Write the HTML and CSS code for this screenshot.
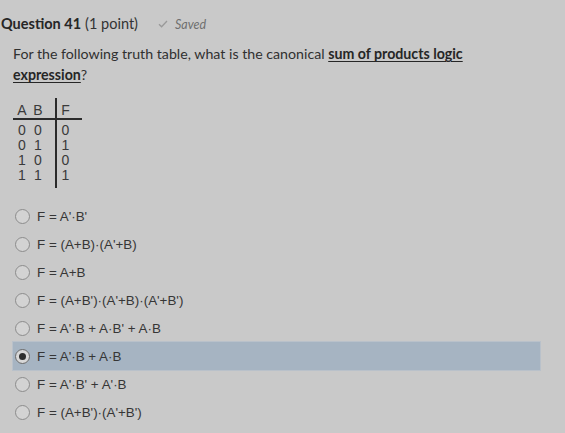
FILE: index.html
```html
<!DOCTYPE html>
<html>
<head>
<meta charset="utf-8">
<link rel="stylesheet" href="styles.css">
</head>
<body>
<div class="page">
  <div class="header">
    <span class="qtitle">Question 41</span>
    <span class="qpoints">(1 point)</span>
    <span class="saved">
      <svg class="check" width="10" height="8" viewBox="0 0 10 8"><path d="M1 4.2 L3.6 6.8 L9 1" fill="none" stroke="#9a9a9a" stroke-width="1.3"/></svg>
      Saved
    </span>
  </div>
  <p class="prompt">For the following truth table, what is the canonical <b class="u">sum of products logic</b><br><b class="u">expression</b>?</p>
  <div class="tt">
    <div class="tt-row head"><span class="ca">A</span><span class="cb">B</span><span class="cf">F</span></div>
    <div class="tt-row first"><span class="ca">0</span><span class="cb">0</span><span class="cf">0</span></div>
    <div class="tt-row"><span class="ca">0</span><span class="cb">1</span><span class="cf">1</span></div>
    <div class="tt-row"><span class="ca">1</span><span class="cb">0</span><span class="cf">0</span></div>
    <div class="tt-row last"><span class="ca">1</span><span class="cb">1</span><span class="cf">1</span></div>
  </div>
  <div class="options">
    <div class="opt"><span class="radio"></span><span class="lbl">F = A'·B'</span></div>
    <div class="opt"><span class="radio"></span><span class="lbl">F = (A+B)·(A'+B)</span></div>
    <div class="opt"><span class="radio"></span><span class="lbl">F = A+B</span></div>
    <div class="opt"><span class="radio"></span><span class="lbl">F = (A+B')·(A'+B)·(A'+B')</span></div>
    <div class="opt"><span class="radio"></span><span class="lbl">F = A'·B + A·B' + A·B</span></div>
    <div class="opt selected"><span class="radio checked"></span><span class="lbl">F = A'·B + A·B</span></div>
    <div class="opt"><span class="radio"></span><span class="lbl">F = A'·B' + A'·B</span></div>
    <div class="opt"><span class="radio"></span><span class="lbl">F = (A+B')·(A'+B')</span></div>
  </div>
</div>
</body>
</html>
```
FILE: styles.css
```css
html, body {
  margin: 0;
  padding: 0;
  background: #c9c9c9;
}
.page {
  width: 565px;
  height: 433px;
  overflow: hidden;
  color: #2b2b2b;
  font-family: Lato, "Liberation Sans", sans-serif;
}
.header {
  display: flex;
  align-items: baseline;
  padding: 14px 0 0 1px;
  height: 22px;
  line-height: 20px;
}
.qtitle {
  font-weight: 700;
  font-size: 14.5px;
  color: #262626;
}
.qpoints {
  font-size: 14.5px;
  margin-left: 4px;
  color: #333;
}
.saved {
  margin-left: 20px;
  font-size: 12.5px;
  font-style: italic;
  color: #6f6f6f;
  display: flex;
  align-items: baseline;
  gap: 7px;
}
.check {
  position: relative;
  top: -1px;
}
.prompt {
  margin: 7px 0 0 13px;
  width: 520px;
  font-size: 14.2px;
  line-height: 21px;
  color: #303030;
}
.u {
  font-weight: 700;
  text-decoration: underline;
  text-underline-offset: 2px;
  color: #262626;
}
.tt {
  margin: 13px 0 0 13px;
  width: 69px;
  font-family: "Liberation Sans", Arial, sans-serif;
  font-size: 14px;
  color: #3a3a3a;
}
.tt-row {
  display: flex;
  line-height: 15px;
}
.tt-row span {
  text-align: center;
}
.ca {
  width: 18px;
}
.cb {
  width: 14px;
  margin-right: 10px;
}
.cf {
  width: 17px;
  border-left: 2px solid #2b2b2b;
}
.tt-row.head {
  line-height: 16px;
  border-bottom: 2px solid #2b2b2b;
}
.tt-row.head span {
  padding-top: 4px;
}
.tt-row.first span {
  padding-top: 3px;
}
.tt-row.last span {
  padding-bottom: 5px;
}
.options {
  margin: 14px 0 0 13px;
  width: 527px;
}
.opt {
  height: 28px;
  display: flex;
  align-items: center;
  padding-left: 2px;
  box-sizing: border-box;
  font-family: "Liberation Sans", Arial, sans-serif;
  font-size: 13.4px;
  color: #363636;
}
.opt.selected {
  background: #a6b4c2;
  box-shadow: 0 0 0 1px #b9c1ca;
}
.radio {
  width: 13px;
  height: 13px;
  border: 1px solid #8c8c8c;
  border-radius: 50%;
  background: #d3d3d3;
  margin-right: 7px;
  display: flex;
  align-items: center;
  justify-content: center;
  flex: none;
}
.radio.checked {
  border-color: #6a6a6a;
  background: #d8d8d8;
}
.radio.checked::after {
  content: "";
  width: 7px;
  height: 7px;
  border-radius: 50%;
  background: #2e2e2e;
}
```
